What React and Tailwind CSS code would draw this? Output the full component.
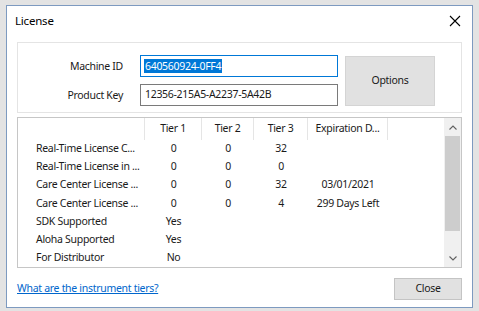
import React from "react";

const rows = [
  ["Real-Time License C...", "0", "0", "32", ""],
  ["Real-Time License in ...", "0", "0", "0", ""],
  ["Care Center License ...", "0", "0", "32", "03/01/2021"],
  ["Care Center License ...", "0", "0", "4", "299 Days Left"],
  ["SDK Supported", "Yes", "", "", ""],
  ["Aloha Supported", "Yes", "", "", ""],
  ["For Distributor", "No", "", "", ""],
];

const cols = ["w-[57px]", "w-[52px]", "w-[54px]", "w-[80px]"];

const App = () => {
  return (
    <div
      className="w-[479px] h-[311px] bg-[#e3e3e3] pt-[5px] pl-[6px] overflow-hidden text-[10.5px] tracking-[-0.3px] text-[#1a1a1a]"
      style={{ fontFamily: '"Noto Sans", "Open Sans", sans-serif' }}
    >
      <div className="w-[467px] h-[303px] border border-[#7d9ac0] bg-white flex flex-col">
        {/* title bar */}
        <div className="h-[30px] flex items-center justify-between pl-[8px] pr-[11px]">
          <span className="text-[11.5px] tracking-[-0.2px] text-black">License</span>
          <svg width="12" height="12" viewBox="0 0 12 12" className="text-black">
            <path d="M1 1L11 11M11 1L1 11" stroke="currentColor" strokeWidth="1.1" />
          </svg>
        </div>

        {/* machine panel */}
        <div className="ml-[10px] mt-[6px] w-[445px] h-[71px] border border-[#e4e4e4] flex">
          <div className="w-[105px] flex flex-col items-end pt-[14px] gap-[10px]">
            <span className="h-[19px] leading-[19px]">Machine ID</span>
            <span className="h-[19px] leading-[19px]">Product Key</span>
          </div>
          <div className="ml-[17px] pt-[12px] flex flex-col gap-[7px]">
            <div className="w-[198px] h-[22px] border border-[#0078d7] flex items-center pl-[3px]">
              <span className="bg-[#0078d7] text-white leading-[14px] px-px">640560924-0FF4</span>
            </div>
            <div className="w-[198px] h-[22px] border border-[#7a7a7a] flex items-center pl-[4px]">
              12356-215A5-A2237-5A42B
            </div>
          </div>
          <div className="ml-[7px] mt-[13px] w-[90px] h-[50px] bg-[#e1e1e1] border border-[#d4d4d4] flex items-center justify-center">
            Options
          </div>
        </div>

        {/* list */}
        <div className="ml-[10px] mt-[4px] w-[445px] h-[151px] border border-[#c6c6c6] flex">
          <div className="flex-1 flex flex-col">
            <div className="h-[22px] flex">
              <div className="w-[127px] border-r border-[#e5e5e5]" />
              <div className="w-[57px] border-r border-[#e5e5e5] flex items-center justify-center">Tier 1</div>
              <div className="w-[52px] border-r border-[#e5e5e5] flex items-center justify-center">Tier 2</div>
              <div className="w-[54px] border-r border-[#e5e5e5] flex items-center justify-center">Tier 3</div>
              <div className="w-[80px] border-r border-[#e5e5e5] flex items-center justify-center">Expiration D...</div>
            </div>
            {rows.map((r, i) => (
              <div key={i} className="h-[18.33px] flex items-center">
                <div className="w-[127px] pl-[18px] whitespace-nowrap">{r[0]}</div>
                {r.slice(1).map((v, j) => (
                  <div key={j} className={`${cols[j]} text-center whitespace-nowrap`}>
                    {v}
                  </div>
                ))}
              </div>
            ))}
          </div>
          {/* scrollbar */}
          <div className="w-[17px] bg-[#f0f0f0] flex flex-col items-center">
            <div className="h-[18px] flex items-center justify-center">
              <svg width="8" height="5" viewBox="0 0 8 5">
                <path d="M0.5 4.5L4 1L7.5 4.5" fill="none" stroke="#606060" strokeWidth="1.1" />
              </svg>
            </div>
            <div className="w-[15px] h-[95px] bg-[#cdcdcd]" />
            <div className="flex-1" />
            <div className="h-[18px] flex items-center justify-center">
              <svg width="8" height="5" viewBox="0 0 8 5">
                <path d="M0.5 0.5L4 4L7.5 0.5" fill="none" stroke="#606060" strokeWidth="1.1" />
              </svg>
            </div>
          </div>
        </div>

        {/* footer */}
        <div className="ml-[10px] mt-[10px] w-[445px] flex items-center justify-between">
          <span className="text-[#0066cc] underline">What are the instrument tiers?</span>
          <div className="w-[68px] h-[22px] bg-[#e1e1e1] border border-[#c4c4c4] flex items-center justify-center">
            Close
          </div>
        </div>
      </div>
    </div>
  );
};

export default App;
